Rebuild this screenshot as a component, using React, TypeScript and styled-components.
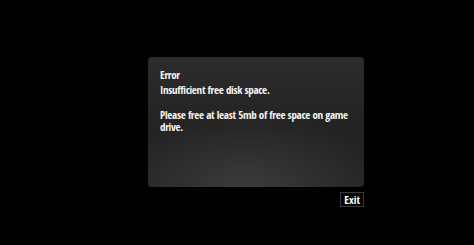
import React from "react";
import styled, { createGlobalStyle } from "styled-components";

const GlobalStyle = createGlobalStyle`
  html, body {
    margin: 0;
    padding: 0;
    background: #000;
  }
  body {
    font-family: "Open Sans Condensed", "Roboto Condensed", sans-serif;
  }
`;

const Screen = styled.div`
  width: 474px;
  height: 245px;
  background: #000;
  padding: 57px 0 0 148px;
  box-sizing: border-box;
  display: flex;
  flex-direction: column;
  align-items: flex-start;
`;

const Column = styled.div`
  width: 216px;
  display: flex;
  flex-direction: column;
  align-items: flex-end;
  gap: 5px;
`;

const Dialog = styled.div`
  width: 216px;
  height: 130px;
  box-sizing: border-box;
  padding: 12px 4px 0 12px;
  border-radius: 4px;
  background:
    radial-gradient(ellipse 60% 55% at 45% 100%, rgba(72, 72, 72, 0.6), rgba(72, 72, 72, 0) 100%),
    linear-gradient(180deg, #2c2c2c 0%, #232323 55%, #262626 100%);
  color: #f6f6f6;
  font-size: 11px;
  letter-spacing: -0.3px;
  line-height: 12px;
`;

const Line = styled.p<{ $gap?: number }>`
  margin: ${(p) => p.$gap ?? 0}px 0 0 0;
`;

const ExitButton = styled.button`
  font-family: inherit;
  font-size: 11px;
  line-height: 13px;
  color: #fff;
  background: #050505;
  border: 1px solid #3a3a3a;
  padding: 0 3px;
  height: 15px;
  cursor: pointer;
`;

export default function App() {
  return (
    <>
      <GlobalStyle />
      <Screen>
        <Column>
          <Dialog>
            <Line>Error</Line>
            <Line $gap={3}>Insufficient free disk space.</Line>
            <Line $gap={13}>Please free at least 5mb of free space on game drive.</Line>
          </Dialog>
          <ExitButton>Exit</ExitButton>
        </Column>
      </Screen>
    </>
  );
}
